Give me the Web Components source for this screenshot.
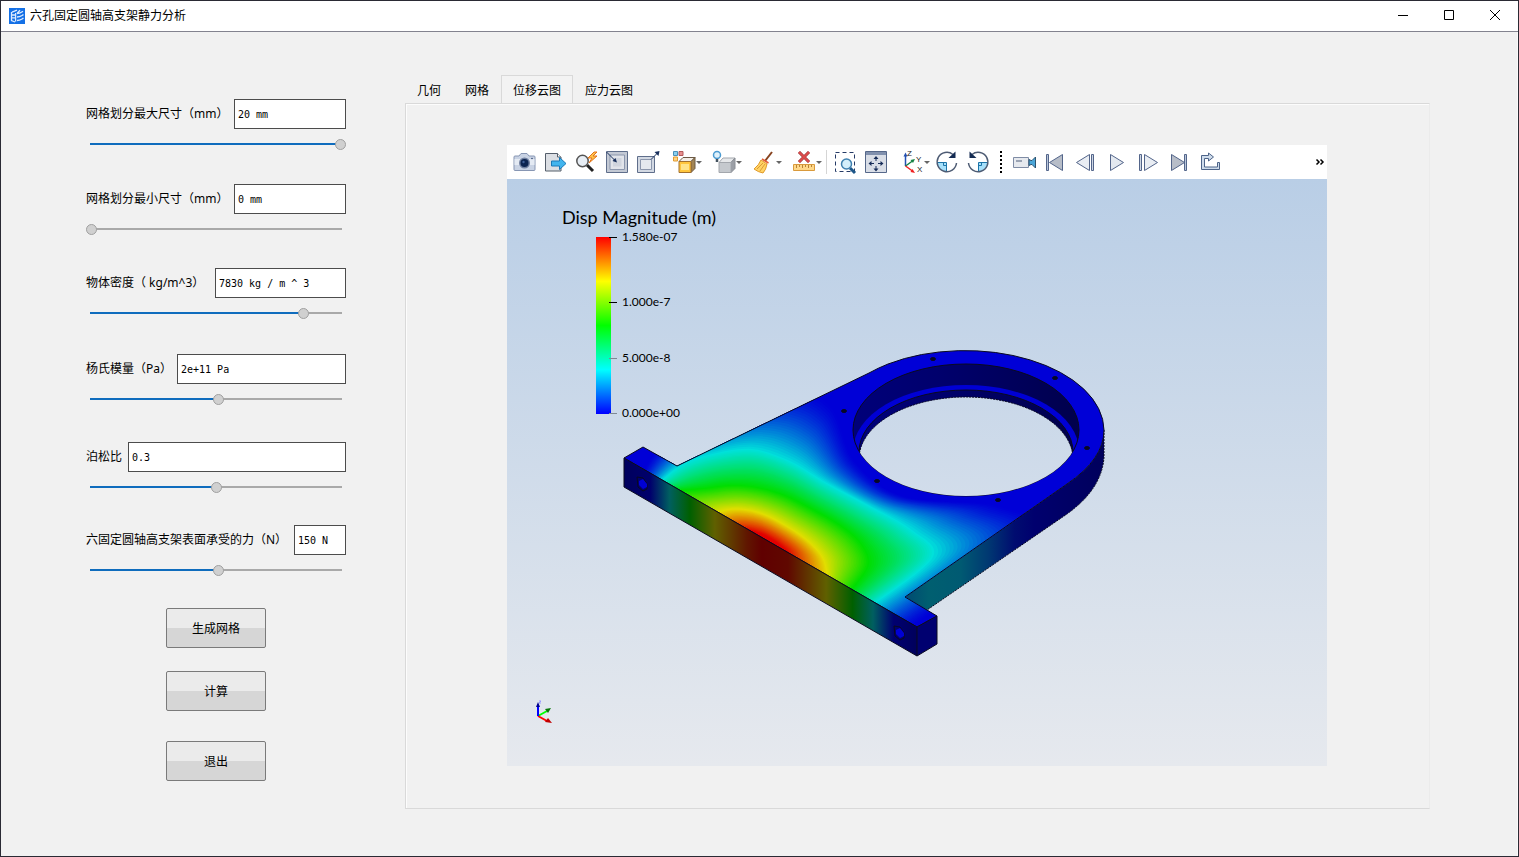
<!DOCTYPE html>
<html lang="zh-CN">
<head>
<meta charset="utf-8">
<title>六孔固定圆轴高支架静力分析</title>
<style>
    html, body {
        margin: 0;
        height: 100%;
    }

    body {
        font-family: "Noto Sans", "Noto Sans CJK SC", sans-serif;
        font-size: 12px;
        color: #000;
        background: #f1f1f1;
    }
</style>
</head>
<body>

<app-window caption="六孔固定圆轴高支架静力分析">
    <param-panel slot="side">
        <param-field label="网格划分最大尺寸（mm）" value="20 mm" percent="100" box="112"></param-field>
        <param-field label="网格划分最小尺寸（mm）" value="0 mm" percent="0" box="112"></param-field>
        <param-field label="物体密度（ kg/m^3）" value="7830 kg / m ^ 3" percent="85" box="131"></param-field>
        <param-field label="杨氏模量（Pa）" value="2e+11 Pa" percent="51" box="169"></param-field>
        <param-field label="泊松比" value="0.3" percent="50" box="218"></param-field>
        <param-field label="六固定圆轴高支架表面承受的力（N）" value="150 N" percent="51" box="52"></param-field>
        <push-button slot="actions">生成网格</push-button>
        <push-button slot="actions">计算</push-button>
        <push-button slot="actions">退出</push-button>
    </param-panel>
    <tab-pane tabs="几何,网格,位移云图,应力云图" active="2">
        <view-toolbar></view-toolbar>
        <contour-view></contour-view>
    </tab-pane>
</app-window>

<script>
// 由模板字符串创建 shadow root
const attach = (host, html) => {
    const template = document.createElement("template");
    template.innerHTML = html;
    const root = host.attachShadow({ mode: "open" });
    root.append(template.content.cloneNode(true));
    return root;
}


// 主窗口
customElements.define("app-window", class extends HTMLElement {
    constructor() {
        super();
        const root = attach(this, /*html*/ `
<style>
    :host {
        display: flex;
        flex-direction: column;
        min-height: 100%;
        box-sizing: border-box;
        border: 1px solid #2a2a34;
        background: #f1f1f1;
    }

    header {
        display: flex;
        align-items: center;
        height: 30px;
        padding-left: 8px;
        background: #fff;
        border-bottom: 1px solid #83838f;
    }

    .logo {
        width: 16px;
        height: 16px;
        margin-right: 5px;
    }

    h1 {
        flex: 1;
        margin: 0;
        font-size: 12px;
        font-weight: normal;
        line-height: 16px;
    }

    header button {
        width: 46px;
        height: 30px;
        padding: 0;
        border: none;
        background: none;
    }

    header button svg {
        display: block;
        margin: auto;
        width: 12px;
        height: 12px;
        fill: none;
        stroke: #000;
    }

    main {
        flex: 1;
        display: flex;
        padding: 43px 87px 47px 85px;
        border: 1px solid #fafafa;
        border-width: 0 1px 0 0;
    }
</style>
<header>
    <svg class="logo" viewBox="0 0 16 16">
        <rect width="16" height="16" fill="#1470e6"/>
        <g fill="none" stroke="#dcebff" stroke-width="1.3">
            <path d="M2.500 4v8.500L6 14M3 4.200l5-2M3 7h3M3 9.800h3M6.600 5v8.500"/>
            <path d="M8 5.500c3 0 4-1 6-2.300M8 9c3 0 4-1 6.500-2.300M8 12.500c3 0 4-1 6.500-2.300M8 5.500l3-3.300"/>
        </g>
    </svg>
    <h1></h1>
    <button aria-label="最小化"><svg viewBox="0 0 12 12"><path d="M1 5.500h10"/></svg></button>
    <button aria-label="最大化"><svg viewBox="0 0 12 12"><path d="M1.500 .5h9v9h-9z"/></svg></button>
    <button aria-label="关闭"><svg viewBox="0 0 12 12"><path d="M1 0l10 10M11 0l-10 10"/></svg></button>
</header>
<main>
    <slot name="side"></slot>
    <slot></slot>
</main>
`);
        root.querySelector("h1").textContent = this.getAttribute("caption");
    }
});


// 左侧参数栏
customElements.define("param-panel", class extends HTMLElement {
    constructor() {
        super();
        attach(this, /*html*/ `
<style>
    :host {
        display: block;
        flex: none;
        width: 260px;
        margin-right: 59px;
        padding-top: 24px;
    }

    .fields {
        display: grid;
        grid-template-rows: 85px 84px 86px 88px 83px 83px;
    }

    .actions {
        display: grid;
        grid-template-rows: 63px 70px 40px;
        justify-content: center;
    }
</style>
<div class="fields"><slot></slot></div>
<div class="actions"><slot name="actions"></slot></div>
`);
    }
});


// 单个参数：标签、输入框、滑块
customElements.define("param-field", class extends HTMLElement {
    constructor() {
        super();
        const root = attach(this, /*html*/ `
<style>
    :host {
        display: block;
    }

    .row {
        display: flex;
        align-items: center;
        justify-content: space-between;
    }

    label {
        white-space: pre;
        line-height: 30px;
    }

    input {
        box-sizing: border-box;
        margin: 0;
        outline: none;
    }

    input[type="text"] {
        flex: none;
        width: var(--box);
        height: 30px;
        padding: 0 3px;
        border: 1px solid #4c4c4c;
        background: #fff;
        color: #000;
        font: 10px "DejaVu Sans Mono", "Noto Sans CJK SC", monospace;
    }

    input[type="range"] {
        appearance: none;
        display: block;
        width: 100%;
        height: 11px;
        margin-top: 10px;
        background: linear-gradient(to right, #0f6cbd var(--percent), #a9a9a9 0) 4px 4px / calc(100% - 8px) 2px no-repeat;
    }

    input[type="range"]::-webkit-slider-thumb {
        appearance: none;
        box-sizing: border-box;
        width: 11px;
        height: 11px;
        border: 1px solid #a0a0a0;
        border-radius: 50%;
        background: #d0d0d0;
    }
</style>
<div class="row">
    <label for="text"></label>
    <input id="text" type="text" spellcheck="false">
</div>
<input type="range" min="0" max="100">
`);
        const name = this.getAttribute("label");
        const range = root.querySelector("input[type=range]");
        root.querySelector("label").textContent = name;
        root.querySelector("#text").value = this.getAttribute("value");
        range.setAttribute("aria-label", name);
        range.value = this.getAttribute("percent");
        this.style.setProperty("--box", this.getAttribute("box") + "px");

        const update = () => this.style.setProperty("--percent", range.value + "%");
        range.addEventListener("input", update);
        update();
    }
});


// 按钮
customElements.define("push-button", class extends HTMLElement {
    constructor() {
        super();
        attach(this, /*html*/ `
<style>
    :host {
        display: block;
    }

    button {
        width: 100px;
        height: 40px;
        padding: 0;
        border: 1px solid #7a7a7a;
        border-radius: 2px;
        background: linear-gradient(#ebebeb 50%, #d6d6d6 0);
        color: #000;
        font: inherit;
    }
</style>
<button type="button"><slot></slot></button>
`);
    }
});


// 选项卡
customElements.define("tab-pane", class extends HTMLElement {
    constructor() {
        super();
        const root = attach(this, /*html*/ `
<style>
    :host {
        flex: 1;
        display: flex;
        flex-direction: column;
        min-width: 0;
    }

    nav {
        display: flex;
        height: 28px;
    }

    nav button {
        padding: 0 11px;
        border: 1px solid transparent;
        border-bottom: none;
        background: none;
        color: #000;
        font: inherit;
    }

    nav button[aria-selected="true"] {
        border-color: #d9d9d9;
        background: #f3f3f3;
    }

    section {
        flex: 1;
        display: flex;
        flex-direction: column;
        padding: 41px 102px 42px 101px;
        border: 1px solid #d9d9d9;
        border-right-color: #ebebeb;
        box-shadow: inset 1px 1px #fcfcfc;
    }
</style>
<nav role="tablist"></nav>
<section role="tabpanel"><slot></slot></section>
`);
        const nav = root.querySelector("nav");
        this.getAttribute("tabs").split(",").forEach((name, index) => {
            const button = document.createElement("button");
            button.textContent = name;
            button.setAttribute("role", "tab");
            button.setAttribute("aria-selected", index == this.getAttribute("active"));
            nav.append(button);
        });
    }
});


// 工具栏图标
const icons = {
    camera: `<path d="M2 7q0-1 1-1h4l2-2.500h6L17 6h5q1 0 1 1v12.500q0 1-1 1H3q-1 0-1-1z" fill="#c9d3e4" stroke="#8796b3"/><path d="M2.500 9h20v6h-20z" fill="#e4eaf3"/><circle cx="12.500" cy="13" r="5.500" fill="#6f7f9f"/><circle cx="12.500" cy="13" r="4" fill="#0c2450"/><circle cx="11.500" cy="12" r="1.200" fill="#3e5f96"/><circle cx="20" cy="8.500" r=".8" fill="#34496f"/>`,
    export: `<path d="M2.500 3.500h12L18 7v14H2.500z" fill="#dcdfe4" stroke="#555e6b"/><path d="M14.500 3.500V7H18" fill="#fff" stroke="#555e6b"/><path d="M8.500 11h8V7.500l6.500 6-6.500 6V16h-8z" fill="#42b5ee" stroke="#1a79b8"/>`,
    probe: `<path d="M13 15l6 6" stroke="#222" stroke-width="3"/><circle cx="8.500" cy="11" r="5.700" fill="#e8eef5" stroke="#555" stroke-width="1.500"/><path d="M20 2l-6 6h4l-3 5 8-7h-4l4-4z" fill="#ffc24a" stroke="#e2731a"/>`,
    zoomin: `<path d="M1.500 1.500h21v21h-21z" fill="#c3c9d4" stroke="#5f6e8b"/><path d="M5 5h14.500v14.500H5z" fill="#e1e4ea" stroke="#8c97ad"/><path d="M8 8h8.500v8.500H8z" fill="#d0d5de"/><path d="M1.500 2l9 9" stroke="#182f5c"/><path d="M12 12.500l-4.500-1.500 3-3z" fill="#182f5c"/>`,
    zoomout: `<path d="M1.500 6.500h17v16h-17z" fill="#d3d9e3" stroke="#5f6e8b"/><path d="M4.500 9.500h11v10h-11z" fill="#e5e9ef" stroke="#8c97ad"/><path d="M15 9.500l7-7" stroke="#182f5c"/><path d="M23.500 1l-1 5-4-4z" fill="#182f5c"/>`,
    cube: `<path d="M1.500 1.500h4v4h-4z" fill="#8ad0f0" stroke="#4a91b8"/><path d="M7 1.500h4v4H7z" fill="#e79090" stroke="#b35858"/><path d="M1.500 7h4v4h-4z" fill="#ffd483" stroke="#e09a30"/><path d="M7 11.500l4-4h12l-4 4z" fill="#f3efe8" stroke="#6c5a45"/><path d="M23 7.500v11l-4 4v-11z" fill="#a28555" stroke="#6c5a45"/><path d="M7 11.500h12v11H7z" fill="#ffc63d" stroke="#a3712e"/><path d="M9 14h8v6H9z" fill="#ffe48a"/>`,
    light: `<path d="M7 12.500l4-4.500h12l-4 4.500z" fill="#e6e8ea" stroke="#a3a7ad"/><path d="M23 8v10.500l-4 4v-10z" fill="#9b9fa6" stroke="#8a8e95"/><path d="M7 12.500h12v10H7z" fill="#c5c9ce" stroke="#a3a7ad"/><circle cx="5" cy="5" r="3.500" fill="#dff1fb" stroke="#4c9bd1" stroke-width="1.500"/><path d="M5 9v3" stroke="#44525f" stroke-width="2.500"/>`,
    broom: `<path d="M13 11l7-9" stroke="#87431f" stroke-width="2"/><path d="M9 10l6 4q-1 6-4 9Q6 22 2 19q5-4 7-9z" fill="#ffd364" stroke="#e09a2b"/><path d="M5 19l6-6M8 21l5-7" stroke="#dc9a36"/><path d="M10 9l6.500 4" stroke="#e55d35" stroke-width="1.500"/>`,
    ruler: `<path d="M7 2l10 10M17 2L7 12" stroke="#8e2a2a" stroke-width="3"/><path d="M7 2l10 10M17 2L7 12" stroke="#dd4d4d" stroke-width="2"/><path d="M1.500 14.500h21v6h-21z" fill="#ffd88a" stroke="#d99a3c"/><path d="M4.500 15v3M7.500 15v2M10.500 15v3M13.500 15v2M16.500 15v3M19.500 15v2" stroke="#b88436"/>`,
    select: `<path d="M2.500 2.500h19v19h-19z" fill="none" stroke="#253a66" stroke-dasharray="4 3"/><path d="M17 18l5 5" stroke="#1d5789" stroke-width="3"/><circle cx="13.500" cy="14" r="5" fill="#d4effb" stroke="#3f80af" stroke-width="1.500"/>`,
    fit: `<path d="M1.500 1.500h21v21h-21z" fill="#d9dee7" stroke="#56688a"/><path d="M2 2h20v3H2z" fill="#8191ae"/><path d="M12 8v3M12 16v3M7 13.500h3M14 13.500h3" stroke="#162c58"/><path d="M12 6l2.500 3h-5zM12 21.500l2.500-3h-5zM4.500 13.500l3-2.500v5zM19.500 13.500l-3-2.500v5z" fill="#162c58"/>`,
    axes: `<path d="M5.500 16V5" stroke="#2450b2" stroke-width="1.500"/><path d="M5.500 2.500l2 4h-4z" fill="#2450b2"/><path d="M5.500 16l7-5" stroke="#168345" stroke-width="1.500"/><path d="M15 9l-2 4-2.500-3z" fill="#168345"/><path d="M5.500 16l7 5" stroke="#ef2020" stroke-width="1.500"/><path d="M15 23l-4.500-1 2-3z" fill="#ef2020"/><g font-family="Liberation Sans, sans-serif" font-size="8" fill="#222"><text x="7" y="6">Z</text><text x="16" y="12">Y</text><text x="17" y="22">X</text></g>`,
    rotateRight: `<path d="M11.500 12.500H2a9.500 9.500 0 0 0 9.500 9.500z" fill="#a6e0fa"/><path d="M2 12.500h9.500V22M8.500 12.500v3h3" fill="none" stroke="#1c75a9"/><path d="M18 4.500A9.700 9.700 0 1 0 21.500 13" fill="none" stroke="#4d5b73" stroke-width="1.500"/><path d="M20.500 1.500v6.500h-7z" fill="#142b52"/>`,
    rotateLeft: `<path d="M12.500 12.500H22a9.500 9.500 0 0 1-9.500 9.500z" fill="#a6e0fa"/><path d="M22 12.500h-9.500V22M15.500 12.500v3h-3" fill="none" stroke="#1c75a9"/><path d="M6 4.500A9.700 9.700 0 1 1 2.500 13" fill="none" stroke="#4d5b73" stroke-width="1.500"/><path d="M3.500 1.500v6.500h7z" fill="#142b52"/>`,
    video: `<path d="M1.500 7.500h15v10h-15z" fill="#e6e9ee" stroke="#7f8ca5"/><path d="M4 10h6v2H4z" fill="#9aa3b3"/><path d="M17 9.500l2 1h1l3.500-3.500v11L20 14.500h-1l-2 1z" fill="#4ba6d8" stroke="#2d536f"/>`,
    first: `<path d="M3.500 4.500h2v16h-2z" fill="#b9c6da" stroke="#53658a"/><path d="M19.500 4.500v16l-13-8z" fill="#b7bdc8" stroke="#53658a"/>`,
    prev: `<path d="M15.500 4.500v16l-13-8z" fill="#e9edf3" stroke="#53658a"/><path d="M17.500 4.500h2v16h-2z" fill="#cdd6e4" stroke="#53658a"/>`,
    play: `<path d="M5.500 4.500v16l13-8z" fill="#e3e8ef" stroke="#53658a"/>`,
    next: `<path d="M3.500 4.500h2v16h-2z" fill="#cdd6e4" stroke="#53658a"/><path d="M8.500 4.500v16l13-8z" fill="#e9edf3" stroke="#53658a"/>`,
    last: `<path d="M4.500 4.500v16l13-8z" fill="#b7bdc8" stroke="#53658a"/><path d="M17.500 4.500h2v16h-2z" fill="#b9c6da" stroke="#53658a"/>`,
    loop: `<path d="M10.500 5.500h-7v14h18v-7h-2v4.500h-13v-8.500h4v2.500l5-4-5-4z" fill="#cfdceb" stroke="#4d6489"/>`
};


// 三维视图工具栏，结尾带 * 的按钮有下拉箭头
customElements.define("view-toolbar", class extends HTMLElement {
    constructor() {
        super();
        const root = attach(this, /*html*/ `
<style>
    :host {
        display: flex;
        align-items: center;
        height: 34px;
        padding: 0 1px;
        background: #fff;
    }

    button {
        flex: none;
        display: flex;
        align-items: center;
        justify-content: center;
        width: 31px;
        height: 34px;
        padding: 0;
        border: none;
        background: none;
        color: #000;
    }

    button.menu {
        width: 40px;
        padding-right: 1px;
        justify-content: flex-end;
    }

    button.menu::after {
        content: "";
        border: 3px solid transparent;
        border-top-color: #666;
        border-bottom: none;
        width: 0;
    }

    svg {
        flex: none;
        width: 24px;
        height: 24px;
        fill: none;
        overflow: visible;
    }

    .line {
        width: 1px;
        height: 24px;
        margin: 0 2px 0 3px;
        background: #d5d5d5;
    }

    .dots {
        width: 2px;
        height: 22px;
        margin: 0 6px 0 7px;
        background: repeating-linear-gradient(#000 0 2px, transparent 2px 4px);
    }

    .more {
        width: 13px;
        margin-left: auto;
    }

    .more svg {
        width: 8px;
        height: 8px;
        stroke: #000;
        stroke-width: 1.500;
    }
</style>
`);
        const layout = "camera export probe zoomin zoomout cube* light* broom* ruler* line select fit axes* rotateRight rotateLeft dots video first prev play next last loop";
        for (const item of layout.split(" ")) {
            const name = item.replace("*", "");
            if (!icons[name]) {
                const line = document.createElement("span");
                line.className = name;
                root.append(line);
                continue;
            }
            const button = document.createElement("button");
            button.setAttribute("aria-label", name);
            button.classList.toggle("menu", item != name);
            button.innerHTML = `<svg viewBox="0 0 24 24">${icons[name]}</svg>`;
            root.append(button);
        }
        const more = document.createElement("button");
        more.className = "more";
        more.setAttribute("aria-label", "more");
        more.innerHTML = `<svg viewBox="0 0 8 8"><path d="M.5 1.500L3 4 .5 6.500M4.500 1.500L7 4 4.500 6.500"/></svg>`;
        root.append(more);
    }
});


// 位移等值线，从 0 到最大值，每条的点数相同，中间值由插值得到
const rings = [
    [[644, 469], [658, 448], [704, 410], [790, 390], [832, 405], [856, 461], [905, 496], [1000, 505], [1040, 535], [915, 626]],
    [[662, 480], [683, 464], [712, 454], [752, 449], [790, 461], [827, 483], [868, 505], [912, 530], [933, 557], [876, 603]],
    [[680, 490], [705, 488], [730, 485], [757, 487], [785, 495], [813, 509], [842, 526], [862, 544], [869, 565], [852, 590]],
    [[717, 512], [729, 509], [743, 509], [758, 512], [773, 518], [787, 526], [801, 535], [814, 546], [824, 559], [828, 575]],
    [[748, 530], [754, 531], [760, 533], [765, 535], [770, 538], [775, 541], [779, 544], [783, 547], [786, 550], [788, 553]]
];
const ramp = [[0, 0, 215], [0, 225, 218], [0, 222, 0], [226, 222, 0], [226, 0, 0]];
const steps = 28;

const mix = (a, b, t) => a.map((value, i) => value + (b[i] - value) * t);

// Catmull-Rom 样条转三次贝塞尔
const spline = (points) => {
    const at = (i) => points[Math.min(Math.max(i, 0), points.length - 1)];
    let d = `M${points[0]}`;
    for (let i = 0; i < points.length - 1; i++) {
        const [p, a, b, n] = [at(i - 1), at(i), at(i + 1), at(i + 2)];
        const c1 = a.map((value, k) => (value + (b[k] - p[k]) / 6).toFixed(2));
        const c2 = b.map((value, k) => (value - (n[k] - a[k]) / 6).toFixed(2));
        d += `C${c1} ${c2} ${b}`;
    }
    return d;
}

const contours = () => {
    let html = "";
    for (let band = 0; band < rings.length - 1; band++) {
        for (let step = 1; step <= steps; step++) {
            const t = step / steps;
            const points = rings[band].map((point, i) => mix(point, rings[band + 1][i], t));
            const last = points[points.length - 1];
            // 固定端附近位移变化较缓
            const color = mix(ramp[band], ramp[band + 1], band ? t : t ** 1.4).map(Math.round);
            html += `<path d="${spline(points)}L${last[0]} ${last[1] + 40}L${points[0][0]} ${points[0][1] + 40}z" fill="rgb(${color})"/>`;
        }
    }
    return html;
}


// 云图视图
customElements.define("contour-view", class extends HTMLElement {
    constructor() {
        super();
        const top = "M624 458L643 447L677 466L869 373Q878 368 888 364A139 80 0 0 1 1104 430Q1104 459 1067 484L905 597L937 616L917 627z";
        const bolts = [[933, 359], [1055, 378], [844, 411], [1087, 448], [877, 481], [998, 500]];
        attach(this, /*html*/ `
<style>
    :host {
        flex: 1;
        display: flex;
        background: linear-gradient(#b9cee6, #e6e9ee);
    }

    svg {
        width: 100%;
        height: auto;
    }

    text {
        font-family: Lato, "Noto Sans", sans-serif;
        font-size: 12px;
        fill: #000;
    }

    .title {
        font-size: 18px;
    }

    .edge {
        fill: none;
        stroke: #0a0a20;
    }
</style>
<svg viewBox="507 179 820 587">
    <defs>
        <linearGradient id="bar" x1="0" y1="1" x2="0" y2="0">
            <stop offset="0" stop-color="#00f"/><stop offset=".25" stop-color="#0ff"/><stop offset=".5" stop-color="#0f0"/>
            <stop offset=".75" stop-color="#ff0"/><stop offset="1" stop-color="#f00"/>
        </linearGradient>
        <linearGradient id="front" gradientUnits="userSpaceOnUse" x1="624" y1="0" x2="917" y2="0">
            <stop offset="0" stop-color="#00005c"/><stop offset=".09" stop-color="#00006c"/><stop offset=".155" stop-color="#005f60"/>
            <stop offset=".225" stop-color="#006000"/><stop offset=".31" stop-color="#606000"/><stop offset=".42" stop-color="#601600"/>
            <stop offset=".47" stop-color="#600000"/><stop offset=".56" stop-color="#600800"/><stop offset=".69" stop-color="#606000"/>
            <stop offset=".78" stop-color="#006000"/><stop offset=".85" stop-color="#005f60"/><stop offset=".92" stop-color="#000070"/>
            <stop offset="1" stop-color="#00005c"/>
        </linearGradient>
        <linearGradient id="side" gradientUnits="userSpaceOnUse" x1="905" y1="0" x2="1104" y2="0">
            <stop offset="0" stop-color="#004a72"/><stop offset=".12" stop-color="#005f70"/><stop offset=".28" stop-color="#005a72"/>
            <stop offset=".42" stop-color="#003872"/><stop offset=".55" stop-color="#000c70"/><stop offset=".65" stop-color="#00006e"/>
            <stop offset="1" stop-color="#00005c"/>
        </linearGradient>
        <linearGradient id="wall">
            <stop offset="0" stop-color="#00007a"/><stop offset=".4" stop-color="#00006c"/><stop offset="1" stop-color="#00004c"/>
        </linearGradient>
        <clipPath id="top"><path d="${top}"/></clipPath>
        <clipPath id="hole"><ellipse cx="966" cy="430" rx="113" ry="66"/></clipPath>
        <mask id="through" maskUnits="userSpaceOnUse" x="507" y="179" width="820" height="587">
            <rect x="507" y="179" width="820" height="587" fill="#fff"/>
            <ellipse cx="966" cy="459" rx="107" ry="62" fill="#000" clip-path="url(#hole)"/>
        </mask>
    </defs>

    <text class="title" x="562" y="224">Disp Magnitude (m)</text>
    <rect x="596" y="237" width="15" height="177" fill="url(#bar)"/>
    <path d="M609 237.500h8M609 302.500h8" stroke="#000"/>
    <path d="M609 358.500h8M609 413.500h8" stroke="#7d8894"/>
    <text x="622" y="241">1.580e-07</text>
    <text x="622" y="306">1.000e-7</text>
    <text x="622" y="362">5.000e-8</text>
    <text x="622" y="417">0.000e+00</text>

    <g mask="url(#through)">
        <path d="M905 597L1067 484Q1104 459 1104 430V457Q1102 489 1067 514L927 610z" fill="url(#side)"/>
        <path class="edge" d="M1104 430V457Q1102 489 1067 514L927 610" stroke-dasharray="2 1"/>
        <path d="${top}" fill="#0000d7"/>
        <g clip-path="url(#top)">${contours()}</g>
        <path class="edge" d="${top}"/>
        <g clip-path="url(#hole)">
            <rect x="852" y="364" width="228" height="132" fill="url(#wall)"/>
            <ellipse cx="966" cy="451" rx="113" ry="66" fill="#0000d4"/>
            <ellipse cx="966" cy="452" rx="107" ry="62" fill="url(#wall)" stroke="#0a0a20"/>
        </g>
        <ellipse class="edge" cx="966" cy="430" rx="113" ry="66"/>
        <path d="M624 458L917 627V656L624 487z" fill="url(#front)"/>
        <path d="M917 627L937 616V644L917 656z" fill="#000070"/>
        <path class="edge" d="M624 458L917 627V656L624 487zM917 627L937 616V644L917 656"/>
        ${bolts.map(([x, y]) => `<ellipse cx="${x}" cy="${y}" rx="2.500" ry="1.500" fill="#05052a" stroke="#0a0a20"/>`).join("")}
        ${[[642, 483], [899, 632]].map(([x, y]) => `<path d="M${x - 5} ${y - 6}l6 1 4 6v5l-4 2-5-4z" fill="#00006c" stroke="#0a0a20"/><path d="M${x - 3} ${y - 2}l4-2 4 5v3l-4 2-4-4z" fill="#0000d4"/>`).join("")}
    </g>
    <ellipse class="edge" cx="966" cy="459" rx="107" ry="62" clip-path="url(#hole)" stroke-dasharray="2 1"/>

    <g stroke-width="2">
        <path d="M538 716l9-5" stroke="#0f0"/><path d="M551 708l-3 5-3-4z" fill="#087808"/>
        <path d="M538 716l9 5" stroke="#f00"/><path d="M552 723l-7-1 3-4z" fill="#c00000"/>
        <path d="M538 716v-10" stroke="#00f"/><path d="M538 702l2 5h-4z" fill="#000090"/>
        <path d="M539 701h2l-2 2h2" stroke="#9a9aff" stroke-width="1" fill="none"/>
    </g>
</svg>
`);
    }
});
</script>
</body>
</html>
